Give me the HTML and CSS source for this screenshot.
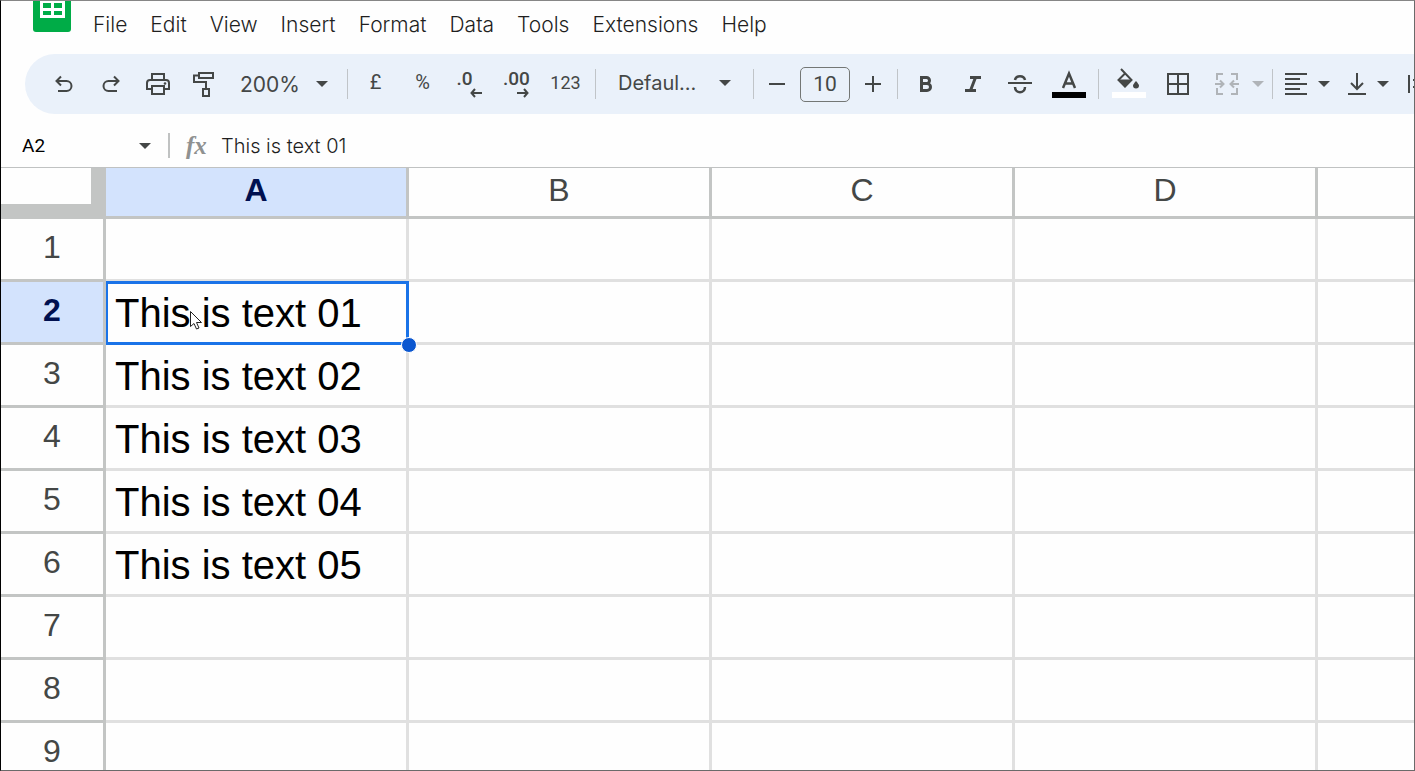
FILE: index.html
```html
<!DOCTYPE html>
<html lang="en">
<head>
<meta charset="utf-8">
<title>Spreadsheet</title>
<link rel="stylesheet" href="styles.css">
</head>
<body>
<header class="topbar">
  <svg class="logo" width="38" height="31" viewBox="0 0 38 31"><path fill="#00ac47" d="M0 0h38v28a3 3 0 0 1-3 3H3a3 3 0 0 1-3-3z"/><path fill="#fff" d="M7 0h25v17H7z"/><path fill="#00ac47" d="M10 2h8v5h-8zM21 2h8v5h-8zM10 10h8v4h-8zM21 10h8v4h-8z"/></svg>
  <nav class="menu" aria-label="Menu">
    <button>File</button><button>Edit</button><button>View</button><button>Insert</button><button>Format</button><button>Data</button><button>Tools</button><button>Extensions</button><button>Help</button>
  </nav>
</header>

<div class="toolbar" role="toolbar" aria-label="Formatting">
  <button class="tool" aria-label="Undo"><svg width="24" height="24" viewBox="0 0 24 24"><path class="line" d="M9 4.500 4.500 9 9 13.500M5 9h9.500a5 5 0 0 1 0 10H6"/></svg></button>
  <button class="tool" aria-label="Redo"><svg width="24" height="24" viewBox="0 0 24 24"><path class="line" d="m15 4.500 4.500 4.500-4.500 4.500M19 9H9.500a5 5 0 0 0 0 10H18"/></svg></button>
  <button class="tool" aria-label="Print"><svg width="26" height="26" viewBox="0 0 26 26"><path class="line" d="M7 9V3h12v6M7 18H2v-6a3 3 0 0 1 3-3h16a3 3 0 0 1 3 3v6h-5M7 15h12v8H7z"/><circle cx="20" cy="12.500" r="1.300" fill="#444746"/></svg></button>
  <button class="tool" aria-label="Paint format"><svg width="26" height="28" viewBox="0 0 26 28"><path class="line" d="M7 3h14v5H7zM7 5.500H2V12h12v7M11 19h6v7h-6z"/></svg></button>
  <div class="picker picker-zoom"><select aria-label="Zoom"><option>200%</option></select><svg class="caret" width="12" height="6" viewBox="0 0 12 6"><path d="M0 0h12L6 6z"/></svg></div>
  <span class="rule"></span>
  <button class="tool symbol">£</button>
  <button class="tool symbol">%</button>
  <button class="tool decimal" aria-label="Decrease decimal places"><span class="short">.0</span><svg width="12" height="10" viewBox="0 0 12 10"><path class="line" d="M5 1 1.500 5 5 9M2 5h10"/></svg></button>
  <button class="tool decimal" aria-label="Increase decimal places"><span>.00</span><svg width="12" height="10" viewBox="0 0 12 10"><path class="line" d="m7 1 3.500 4L7 9M10 5H0"/></svg></button>
  <button class="tool tool-wide number">123</button>
  <span class="rule"></span>
  <div class="picker picker-font"><select aria-label="Font"><option>Defaul...</option></select><svg class="caret" width="12" height="6" viewBox="0 0 12 6"><path d="M0 0h12L6 6z"/></svg></div>
  <span class="rule rule-tight"></span>
  <button class="tool step" aria-label="Decrease font size"><svg width="16" height="16" viewBox="0 0 16 16"><path class="line" d="M0 8h16"/></svg></button>
  <input class="size" aria-label="Font size" value="10">
  <button class="tool step" aria-label="Increase font size"><svg width="16" height="16" viewBox="0 0 16 16"><path class="line" d="M0 8h16M8 0v16"/></svg></button>
  <span class="rule rule-after"></span>
  <button class="tool" aria-label="Bold"><svg width="24" height="24" viewBox="0 0 24 24"><path fill="none" stroke="#444746" stroke-width="3" d="M7.500 5.500h5a3 3 0 0 1 0 6h-5zM7.500 11.500H13a3.500 3.500 0 0 1 0 7H7.500z"/></svg></button>
  <button class="tool" aria-label="Italic"><svg width="24" height="24" viewBox="0 0 24 24"><path fill="none" stroke="#444746" stroke-width="3" d="M9 5.500h11M4 18.500h11M14.500 5.500l-5 13"/></svg></button>
  <button class="tool" aria-label="Strikethrough"><svg width="24" height="24" viewBox="0 0 24 24"><path class="line" d="M0 11h24"/><path fill="none" stroke="#444746" stroke-width="2.500" d="M17 8c-1-5-9-5-10 0M7 15c0 7 10 7 10 0"/></svg></button>
  <button class="tool tool-wide" aria-label="Text colour"><svg width="34" height="28" viewBox="0 0 34 28"><path fill="none" stroke="#444746" stroke-width="2.500" d="m11 18 6-14.500L23 18M13 13.500h8"/><path fill="#000" d="M0 22h34v6H0z"/></svg></button>
  <span class="rule"></span>
  <button class="tool tool-wide fill" aria-label="Fill colour"><svg width="34" height="34" viewBox="0 0 34 34"><path fill="none" stroke="#444746" stroke-width="2" d="m9 3 10.500 11-6.500 6.500L6.500 14 13 7.500"/><path fill="#444746" d="M6 13.500h14L13 21.500zM24 15q3 3.500 3 4.500a3 3 0 0 1-6 0q0-1 3-4.500z"/><path fill="#fff" d="M0 26h34v6H0z"/></svg></button>
  <button class="tool" aria-label="Borders"><svg width="22" height="22" viewBox="0 0 22 22"><path class="line" d="M1 1h20v20H1zM11 1v20M1 11h20"/></svg></button>
  <button class="tool tool-wide" aria-label="Merge cells" disabled><svg width="24" height="22" viewBox="0 0 24 22"><path fill="none" stroke="#b0b4b8" stroke-width="2" d="M8 1H2v6M2 15v6h6M16 1h6v6M22 15v6h-6M0 11h8M5 7.500 8.500 11 5 14.500M24 11h-8M19 7.500 15.500 11l3.500 3.500"/></svg></button>
  <button class="drop" aria-label="Merge type" disabled><svg class="caret" width="12" height="6" viewBox="0 0 12 6"><path d="M0 0h12L6 6z"/></svg></button>
  <span class="rule rule-after"></span>
  <button class="tool pair" aria-label="Horizontal align"><svg width="22" height="22" viewBox="0 0 22 22"><path class="line" d="M0 1h22M0 6h15M0 11h22M0 16h15M0 21h22"/></svg><svg class="caret" width="12" height="6" viewBox="0 0 12 6"><path d="M0 0h12L6 6z"/></svg></button>
  <button class="tool pair" aria-label="Vertical align"><svg width="18" height="22" viewBox="0 0 18 22"><path class="line" d="M9 0v15M3 10l6 6 6-6M0 21h18"/></svg><svg class="caret" width="12" height="6" viewBox="0 0 12 6"><path d="M0 0h12L6 6z"/></svg></button>
  <button class="tool clipped" aria-label="Text wrapping"><svg width="22" height="22" viewBox="0 0 22 22"><path class="line" d="M1 2v18M5 7h4M5 14h4"/></svg></button>
</div>

<div class="formula-bar">
  <input class="name-box" aria-label="Name box" value="A2">
  <svg class="caret" width="12" height="6" viewBox="0 0 12 6"><path d="M0 0h12L6 6z"/></svg>
  <span class="formula-rule"></span>
  <label class="fx" for="formula">fx</label>
  <input class="formula" id="formula" value="This is text 01">
</div>

<main class="sheet">
  <table class="grid">
    <colgroup><col class="col-head"><col class="col"><col class="col"><col class="col"><col class="col"><col class="col"></colgroup>
    <thead><tr><td class="corner"></td><th class="selected" scope="col">A</th><th scope="col">B</th><th scope="col">C</th><th scope="col">D</th><th scope="col"></th></tr></thead>
    <tbody>
      <tr><th scope="row">1</th><td></td><td></td><td></td><td></td><td></td></tr>
      <tr><th class="selected" scope="row">2</th><td class="active">This is text 01<span class="selection"></span><svg class="cursor" width="13" height="19" viewBox="0 0 13 19"><path fill="#fff" stroke="#222" d="M.5.500v15l3.500-3 2.500 5.500 2.500-1-2.500-5.500h5z"/></svg></td><td></td><td></td><td></td><td></td></tr>
      <tr><th scope="row">3</th><td>This is text 02</td><td></td><td></td><td></td><td></td></tr>
      <tr><th scope="row">4</th><td>This is text 03</td><td></td><td></td><td></td><td></td></tr>
      <tr><th scope="row">5</th><td>This is text 04</td><td></td><td></td><td></td><td></td></tr>
      <tr><th scope="row">6</th><td>This is text 05</td><td></td><td></td><td></td><td></td></tr>
      <tr><th scope="row">7</th><td></td><td></td><td></td><td></td><td></td></tr>
      <tr><th scope="row">8</th><td></td><td></td><td></td><td></td><td></td></tr>
      <tr><th scope="row">9</th><td></td><td></td><td></td><td></td><td></td></tr>
    </tbody>
  </table>
</main>
</body>
</html>
```

FILE: styles.css
```css
* { box-sizing: border-box; }

body {
  margin: 0;
  height: 100vh;
  display: flex;
  flex-direction: column;
  overflow: hidden;
  background: #fefefe;
  border: 1px solid #6a6a6a;
  border-top-color: #868686;
  border-left-color: #000;
  font-family: Roboto, "Liberation Sans", sans-serif;
  color: #1f1f1f;
}

button, select, input {
  margin: 0;
  padding: 0;
  border: 0;
  background: none;
  color: inherit;
  font: inherit;
}

svg { display: block; flex: none; }
.line { fill: none; stroke: #444746; stroke-width: 2; }
.caret { fill: #444746; }

.topbar { flex: none; display: flex; height: 53px; padding-left: 32px; }
.menu { display: flex; align-items: center; gap: 23px; padding: 0 0 7px 22px; font-family: Inter, sans-serif; font-size: 21px; font-weight: 300; }

.toolbar {
  flex: none;
  display: flex;
  align-items: center;
  height: 60px;
  margin-left: 24px;
  padding-left: 15px;
  overflow: hidden;
  background: #eaf1fa;
  border-radius: 30px 0 0 30px;
  color: #444746;
}
.tool { flex: none; display: flex; align-items: center; justify-content: center; width: 47px; height: 44px; }
.tool-wide { width: 51px; }
.step { width: 46px; }
.fill { padding-bottom: 2px; }
.symbol { font-size: 20px; padding-bottom: 4px; }
.number { font-size: 18px; padding-bottom: 4px; }
.decimal { flex-direction: column; align-items: center; font-size: 19px; font-weight: 500; line-height: 18px; }
.decimal svg { margin-left: 12px; }
.decimal .short { padding-right: 10px; }
.rule { flex: none; width: 1px; height: 30px; margin: 0 4px; background: #c0c4c8; }
.picker + .rule { margin-left: 0; }
.rule-tight { margin: 0; }
.rule-after { margin-left: 1px; }
.drop + .rule { margin-left: 8px; }

.picker { flex: none; display: flex; align-items: center; font-family: Inter, sans-serif; font-size: 21px; }
.picker select { appearance: none; flex: 1; }
.picker-zoom { width: 119px; padding: 0 19px 0 12px; }
.picker-font { width: 153px; padding: 0 22px 2px 18px; font-size: 20px; }

.size { flex: none; width: 50px; height: 35px; border: 1px solid #747775; border-radius: 5px; text-align: center; font-size: 21px; }
.drop:disabled { width: 14px; display: flex; justify-content: center; }
.drop .caret { fill: #b0b4b8; }
.pair { width: 61px; gap: 11px; }
.clipped { width: 22px; margin-left: 9px; }

.formula-bar { flex: none; display: flex; align-items: center; height: 54px; padding: 10px 0 0 21px; border-bottom: 1px solid #c0c2c2; color: #000; }
.name-box { width: 117px; font-size: 19px; }
.formula-rule { width: 2px; height: 25px; margin: 0 16px 0 17px; background: #c0c2c2; }
.fx { width: 35px; font: italic bold 25px "Liberation Serif", serif; color: #8f9191; }
.formula { flex: 1; min-width: 0; font-family: Inter, sans-serif; font-size: 20px; font-weight: 300; color: #1f1f1f; }

.sheet { flex: 1; min-height: 0; overflow: hidden; }
.grid { table-layout: fixed; width: 1620px; border-collapse: separate; border-spacing: 0; }
.col-head { width: 105px; }
.col { width: 303px; }
.grid td, .grid th { height: 63px; padding: 0; border: solid #e0e0e0; border-width: 0 3px 3px 0; }
.grid td { padding: 2px 0 0 9px; font: 40px/46px "Liberation Sans", Arial, sans-serif; color: #000; }
.grid th { padding-bottom: 4px; border-color: #c3c5c4; font: 400 32px/40px "Liberation Sans", Arial, sans-serif; color: #444746; text-align: center; }
.grid thead th, .grid thead td { height: 51px; }
.grid th.selected { background: #d3e3fd; color: #001050; font-weight: 700; }
.grid .corner { border: solid #c3c5c4; border-width: 0 15px 15px 0; }

.active { position: relative; }
.selection { position: absolute; inset: -1px -3px -3px 0; border: 3px solid #1a73e8; border-left-width: 2px; }
.selection::after { content: ""; position: absolute; right: -11px; bottom: -11px; width: 14px; height: 14px; border: 1px solid #fff; border-radius: 50%; background: #0b57d0; }
.cursor { position: absolute; left: 84px; top: 29px; }
```
